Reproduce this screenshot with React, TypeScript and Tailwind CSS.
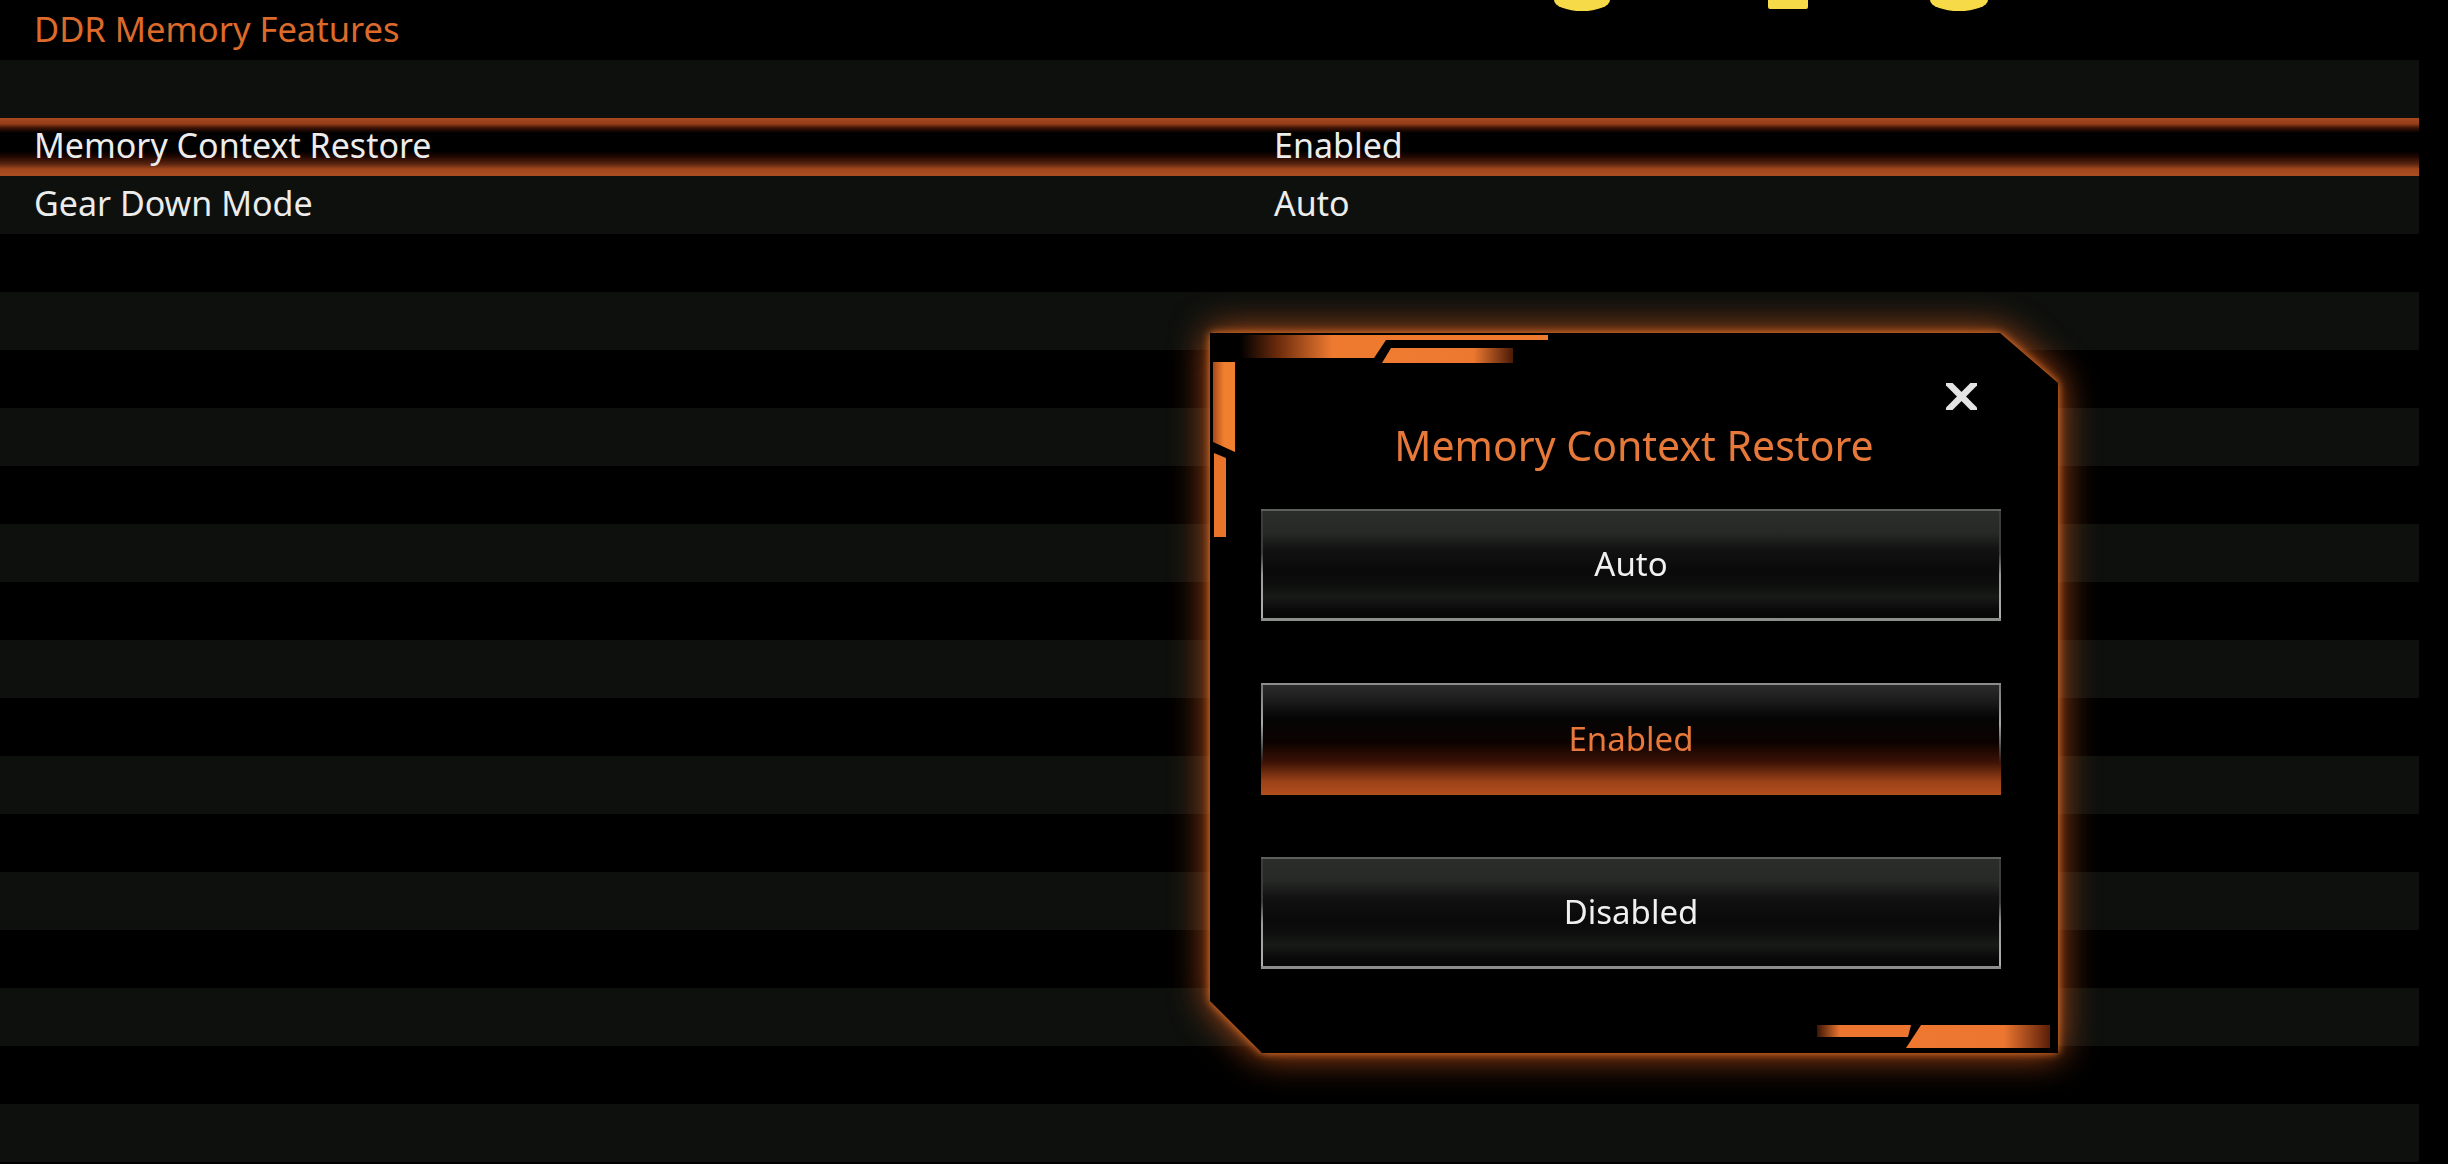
import React from "react";

type RowData = { label: string; value: string; active?: boolean };

const rows: RowData[] = [
  { label: "", value: "" },
  { label: "Memory Context Restore", value: "Enabled", active: true },
  { label: "Gear Down Mode", value: "Auto" },
  ...Array.from({ length: 16 }, () => ({ label: "", value: "" })),
];

function Row({ row, index }: { row: RowData; index: number }) {
  const bg = row.active
    ? "bg-[linear-gradient(to_bottom,#a8491f_0px,#923d19_6px,#3a1206_10px,#000_15px,#000_33px,#1c0601_38px,#5a2410_46px,#a0471e_51px,#ac4e21_58px)]"
    : index % 2 === 0
    ? "bg-[#0e100d]"
    : "bg-black";
  return (
    <div className={`flex h-[58px] w-[2419px] shrink-0 items-center pb-[5px] text-[34px] leading-[40px] text-[#ececec] ${bg}`}>
      <div className="w-[1274px] pl-[34px]">{row.label}</div>
      <div>{row.value}</div>
    </div>
  );
}

function OptionButton({ label, selected }: { label: string; selected?: boolean }) {
  if (selected) {
    return (
      <div className="relative flex h-[112px] w-[740px] items-center justify-center border-t-2 border-t-[#8c8c8c] bg-[linear-gradient(to_bottom,#2b2b2b_0%,#1c1c1c_14%,#050505_30%,#0b0200_52%,#3b1205_70%,#9c4219_88%,#b24e1d_100%)] text-[33px] text-[#e8793b]">
        <span className="absolute left-0 top-0 h-full w-[2px] bg-[linear-gradient(to_bottom,#777_0%,#a8a8a8_35%,#555_55%,transparent_72%)]" />
        <span className="absolute right-0 top-0 h-full w-[2px] bg-[linear-gradient(to_bottom,#777_0%,#a8a8a8_35%,#555_55%,transparent_72%)]" />
        <span className="pb-[2px] leading-[40px]">{label}</span>
      </div>
    );
  }
  return (
    <div className="relative flex h-[112px] w-[740px] items-center justify-center border-t-2 border-b-[3px] border-t-[#5e605e] border-b-[#8d8f8d] bg-[linear-gradient(to_bottom,#2b2d2b_0%,#272927_20%,#111211_36%,#0a0a0a_55%,#0c0d0c_68%,#181a18_80%,#0a0a0a_92%,#060606_100%)] text-[33px] text-[#f0f0f0]">
      <span className="absolute left-0 top-0 h-full w-[2px] bg-[linear-gradient(to_bottom,#3c3c3c_0%,#3c3c3c_40%,#9a9a9a_60%,#b0b0b0_100%)]" />
      <span className="absolute right-0 top-0 h-full w-[2px] bg-[linear-gradient(to_bottom,#3c3c3c_0%,#3c3c3c_40%,#9a9a9a_60%,#b0b0b0_100%)]" />
      <span className="pb-[2px] leading-[40px]">{label}</span>
    </div>
  );
}

function FrameDecor() {
  return (
    <svg className="pointer-events-none absolute left-0 top-0" width="848" height="720" viewBox="0 0 848 720">
      <defs>
        <linearGradient id="tl" x1="30" y1="0" x2="338" y2="0" gradientUnits="userSpaceOnUse">
          <stop offset="0" stopColor="#000" />
          <stop offset="0.12" stopColor="#6a2a0c" />
          <stop offset="0.3" stopColor="#ee7a30" />
          <stop offset="1" stopColor="#ee7a30" />
        </linearGradient>
        <linearGradient id="par" x1="172" y1="0" x2="303" y2="0" gradientUnits="userSpaceOnUse">
          <stop offset="0" stopColor="#f07c32" />
          <stop offset="0.7" stopColor="#ec7830" />
          <stop offset="1" stopColor="#4a1a06" />
        </linearGradient>
        <linearGradient id="lb" x1="3" y1="0" x2="25" y2="0" gradientUnits="userSpaceOnUse">
          <stop offset="0" stopColor="#a8481a" />
          <stop offset="0.5" stopColor="#f0802f" />
          <stop offset="1" stopColor="#f0802f" />
        </linearGradient>
        <linearGradient id="br1" x1="607" y1="0" x2="699" y2="0" gradientUnits="userSpaceOnUse">
          <stop offset="0" stopColor="#3a1406" />
          <stop offset="0.25" stopColor="#ec7630" />
          <stop offset="1" stopColor="#ec7630" />
        </linearGradient>
        <linearGradient id="br2" x1="696" y1="0" x2="840" y2="0" gradientUnits="userSpaceOnUse">
          <stop offset="0" stopColor="#ee7830" />
          <stop offset="0.68" stopColor="#ec7630" />
          <stop offset="1" stopColor="#5a1e08" />
        </linearGradient>
      </defs>
      <polygon points="30,2 338,2 338,7 176,7 164,25 30,25" fill="url(#tl)" />
      <polygon points="181,15 303,15 303,30 172,30" fill="url(#par)" />
      <polygon points="3,29 25,29 25,119 3,109" fill="url(#lb)" />
      <polygon points="4,120 16,125 16,204 4,204" fill="#e8742c" />
      <polygon points="607,692 701,692 698,704 607,704" fill="url(#br1)" />
      <polygon points="711,692 840,692 840,715 696,715" fill="url(#br2)" />
    </svg>
  );
}

function CloseIcon() {
  return (
    <svg width="31" height="27" viewBox="0 0 31 27">
      <g stroke="#e4e4e4" strokeWidth="6.5">
        <line x1="1" y1="-1" x2="30" y2="28" />
        <line x1="30" y1="-1" x2="1" y2="28" />
      </g>
    </svg>
  );
}

function Dialog() {
  return (
    <div className="absolute left-[1210px] top-[333px] h-[720px] w-[848px] [filter:drop-shadow(0_0_4px_rgba(240,120,40,1))_drop-shadow(0_0_18px_rgba(225,95,30,0.85))]">
      <div className="relative flex h-full w-full flex-col bg-black [clip-path:polygon(0_0,790px_0,848px_50px,848px_720px,52px_720px,0_668px)]">
        <FrameDecor />
        <div className="absolute left-[736px] top-[50px]">
          <CloseIcon />
        </div>
        <h2 className="mt-[88px] text-center text-[41px] font-normal leading-[48px] text-[#e6793a]">Memory Context Restore</h2>
        <div className="ml-[51px] mt-[40px] flex w-[740px] flex-col gap-[62px]">
          <OptionButton label="Auto" />
          <OptionButton label="Enabled" selected />
          <OptionButton label="Disabled" />
        </div>
      </div>
    </div>
  );
}

export default function App() {
  return (
    <div className="relative h-[1164px] w-[2448px] overflow-hidden bg-black font-['Noto_Sans',sans-serif]">
      <div className="flex h-[60px] items-center pb-[2px] pl-[34px] text-[34.5px] leading-[40px] text-[#dc6a2a]">DDR Memory Features</div>
      <div className="flex flex-col">
        {rows.map((r, i) => (
          <Row key={i} row={r} index={i} />
        ))}
      </div>
      <Dialog />
      <div aria-hidden className="absolute left-[1554px] top-0 h-[11px] w-[56px] rounded-b-[50%_100%] bg-[#f6da48]" />
      <div aria-hidden className="absolute left-[1768px] top-0 h-[9px] w-[40px] rounded-b-[2px] bg-[#f6da48]" />
      <div aria-hidden className="absolute left-[1930px] top-0 h-[11px] w-[58px] rounded-b-[50%_100%] bg-[#f6da48]" />
    </div>
  );
}
